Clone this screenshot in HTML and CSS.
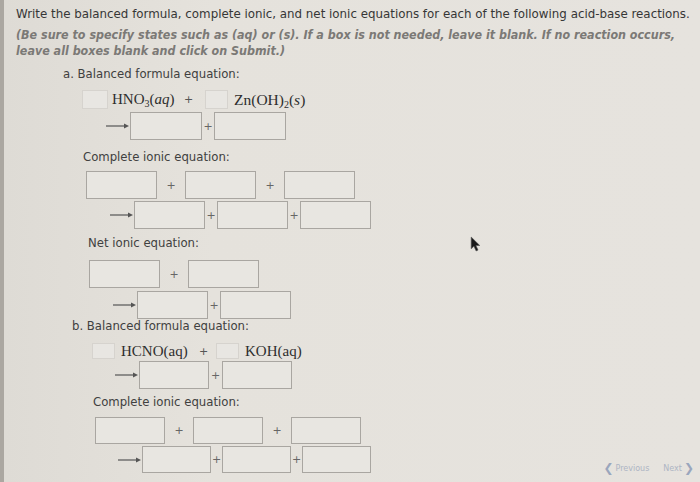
FILE: index.html
```html
<!DOCTYPE html>
<html>
<head>
<meta charset="utf-8">
<link rel="stylesheet" href="styles.css">
</head>
<body>
<div class="page">
  <div class="intro">
    <p class="lead">Write the balanced formula, complete ionic, and net ionic equations for each of the following acid-base reactions.</p>
    <p class="note">(Be sure to specify states such as (aq) or (s). If a box is not needed, leave it blank. If no reaction occurs, leave all boxes blank and click on Submit.)</p>
  </div>

  <div class="label label-a">a. Balanced formula equation:</div>
  <div class="eq react react-a">
    <span class="coef"></span>
    <span class="chem chem-1">HNO<sub>3</sub>(<i>aq</i>)</span>
    <span class="rplus">+</span>
    <span class="coef coef-2"></span>
    <span class="chem chem-2">Zn(OH)<sub>2</sub>(<i>s</i>)</span>
  </div>
  <div class="eq prod prod-a">
    <span class="arrow"><svg width="24" height="8" viewBox="0 0 24 8"><line x1="0" y1="4" x2="21" y2="4" stroke="#555" stroke-width="1.2"/><path d="M18 1.5 L23 4 L18 6.5 Z" fill="#555"/></svg></span>
    <span class="box"></span><span class="op op-n">+</span><span class="box"></span>
  </div>

  <div class="label label-a-ci">Complete ionic equation:</div>
  <div class="eq ci-a1">
    <span class="box"></span><span class="op op-w">+</span><span class="box"></span><span class="op op-w">+</span><span class="box"></span>
  </div>
  <div class="eq ci-a2">
    <span class="arrow"><svg width="24" height="8" viewBox="0 0 24 8"><line x1="0" y1="4" x2="21" y2="4" stroke="#555" stroke-width="1.2"/><path d="M18 1.5 L23 4 L18 6.5 Z" fill="#555"/></svg></span>
    <span class="box"></span><span class="op op-n">+</span><span class="box"></span><span class="op op-n">+</span><span class="box"></span>
  </div>

  <div class="label label-a-ni">Net ionic equation:</div>
  <div class="eq ni-a1">
    <span class="box"></span><span class="op op-w">+</span><span class="box"></span>
  </div>
  <div class="eq ni-a2">
    <span class="arrow"><svg width="24" height="8" viewBox="0 0 24 8"><line x1="0" y1="4" x2="21" y2="4" stroke="#555" stroke-width="1.2"/><path d="M18 1.5 L23 4 L18 6.5 Z" fill="#555"/></svg></span>
    <span class="box"></span><span class="op op-n">+</span><span class="box"></span>
  </div>

  <div class="label label-b">b. Balanced formula equation:</div>
  <div class="eq react react-b">
    <span class="coef coef-b"></span>
    <span class="chem chem-3">HCNO(aq)</span>
    <span class="rplus rplus-b">+</span>
    <span class="coef coef-b"></span>
    <span class="chem chem-4">KOH(aq)</span>
  </div>
  <div class="eq prod prod-b">
    <span class="arrow"><svg width="24" height="8" viewBox="0 0 24 8"><line x1="0" y1="4" x2="21" y2="4" stroke="#555" stroke-width="1.2"/><path d="M18 1.5 L23 4 L18 6.5 Z" fill="#555"/></svg></span>
    <span class="box"></span><span class="op op-n">+</span><span class="box"></span>
  </div>

  <div class="label label-b-ci">Complete ionic equation:</div>
  <div class="eq ci-b1">
    <span class="box"></span><span class="op op-w">+</span><span class="box"></span><span class="op op-w">+</span><span class="box"></span>
  </div>
  <div class="eq ci-b2">
    <span class="arrow"><svg width="24" height="8" viewBox="0 0 24 8"><line x1="0" y1="4" x2="21" y2="4" stroke="#555" stroke-width="1.2"/><path d="M18 1.5 L23 4 L18 6.5 Z" fill="#555"/></svg></span>
    <span class="box"></span><span class="op op-n">+</span><span class="box"></span><span class="op op-n">+</span><span class="box"></span>
  </div>

  <div class="cursor"><svg width="12" height="16" viewBox="0 0 11 15"><path d="M1 1 L1 12 L3.6 9.6 L5.6 14 L7.4 13.2 L5.4 8.9 L9 8.9 Z" fill="#1a1a1a" stroke="#555" stroke-width="0.6"/></svg></div>

  <div class="nav">
    <span class="nav-btn"><span class="chev">&#x276E;</span>Previous</span>
    <span class="nav-btn nav-next">Next<span class="chev">&#x276F;</span></span>
  </div>
</div>
</body>
</html>
```

FILE: styles.css
```css
html, body {
  margin: 0;
  padding: 0;
}
body {
  background: #e3e0da;
  font-family: "DejaVu Sans", "Liberation Sans", sans-serif;
  color: #3a3a3a;
}
.page {
  position: relative;
  width: 700px;
  height: 482px;
  overflow: hidden;
  box-sizing: border-box;
  border-left: 4px solid #aba7a1;
  background: linear-gradient(90deg, #dedbd5 0%, #e5e2dc 30%, #e6e3de 100%);
}
.intro {
  padding: 6px 0 0 12px;
}
.intro p {
  margin: 0;
  line-height: 16px;
}
.lead {
  font-size: 11.85px;
  color: #363636;
  white-space: nowrap;
}
.note {
  margin-top: 5px !important;
  font-family: "DejaVu Sans Condensed", "DejaVu Sans", sans-serif;
  font-size: 12.4px;
  font-weight: bold;
  font-style: italic;
  color: #7b7976;
  width: 672px;
}
.label {
  font-size: 11.7px;
  line-height: 16px;
  color: #404040;
}
.label-a { margin: 7px 0 0 59px; }
.label-a-ci { margin: 9px 0 0 79px; }
.label-a-ni { margin: 6px 0 0 84px; }
.label-b { margin: -1px 0 0 68px; }
.label-b-ci { margin: 5px 0 0 89px; }

.eq {
  display: flex;
  align-items: center;
}
.box {
  width: 71px;
  height: 28px;
  box-sizing: border-box;
  border: 1px solid #a9a6a1;
  background: #e8e6e1;
  flex: none;
}
.op {
  flex: none;
  text-align: center;
  font-size: 11px;
  color: #666666;
}
.op-w { width: 28px; }
.op-n { width: 12px; }
.arrow {
  width: 24px;
  display: flex;
  align-items: center;
  flex: none;
}
.arrow svg { display: block; }

.react {
  height: 19px;
}
.coef {
  width: 26px;
  height: 19px;
  box-sizing: border-box;
  border: 1px solid #d6d3ce;
  background: #e8e6e2;
  flex: none;
}
.coef-2 { width: 23px; }
.chem {
  font-family: "Liberation Serif", "DejaVu Serif", serif;
  font-size: 15px;
  color: #2e2e2e;
  white-space: nowrap;
}
.chem sub {
  font-size: 10px;
  vertical-align: -3px;
  line-height: 0;
}
.chem-1 { margin-left: 4px; width: 72px; }
.chem-2 { margin-left: 6px; font-size: 15.5px; }
.rplus {
  font-size: 11px;
  color: #555;
  width: 15px;
  margin-right: 6px;
}
.react-a { margin: 8px 0 0 78px; }
.prod-a { margin: 3px 0 0 102px; }
.prod-a .box { width: 72px; }

.ci-a1 { margin: 6px 0 0 82px; }
.ci-a2 { margin: 2px 0 0 106px; }
.ni-a1 { margin: 9px 0 0 85px; }
.ni-a2 { margin: 3px 0 0 109px; }

.react-b { margin: 9px 0 0 88px; height: 16px; }
.coef-b { width: 23px; height: 16px; }
.chem-3 { margin-left: 6px; width: 78px; }
.chem-4 { margin-left: 6px; }
.rplus-b { width: 17px; margin-right: 0; }
.prod-b { margin: 2px 0 0 111px; }
.prod-b .op-n { width: 13px; }
.prod-b .box { width: 70px; }

.ci-b1 { margin: 7px 0 0 91px; }
.ci-b1 .box { width: 70px; height: 27px; }
.ci-b2 { margin: 2px 0 0 114px; }
.ci-b2 .box { width: 69px; height: 27px; }
.ci-b2 .op-n { width: 11px; }

.cursor {
  position: absolute;
  left: 466px;
  top: 236px;
}
.nav {
  position: absolute;
  right: 6px;
  top: 461px;
  display: flex;
  gap: 14px;
  font-size: 8px;
  color: #aeb5c4;
}
.nav-btn {
  display: flex;
  align-items: center;
  gap: 2px;
}
.chev {
  font-size: 12px;
  color: #9aa6bd;
}
```
